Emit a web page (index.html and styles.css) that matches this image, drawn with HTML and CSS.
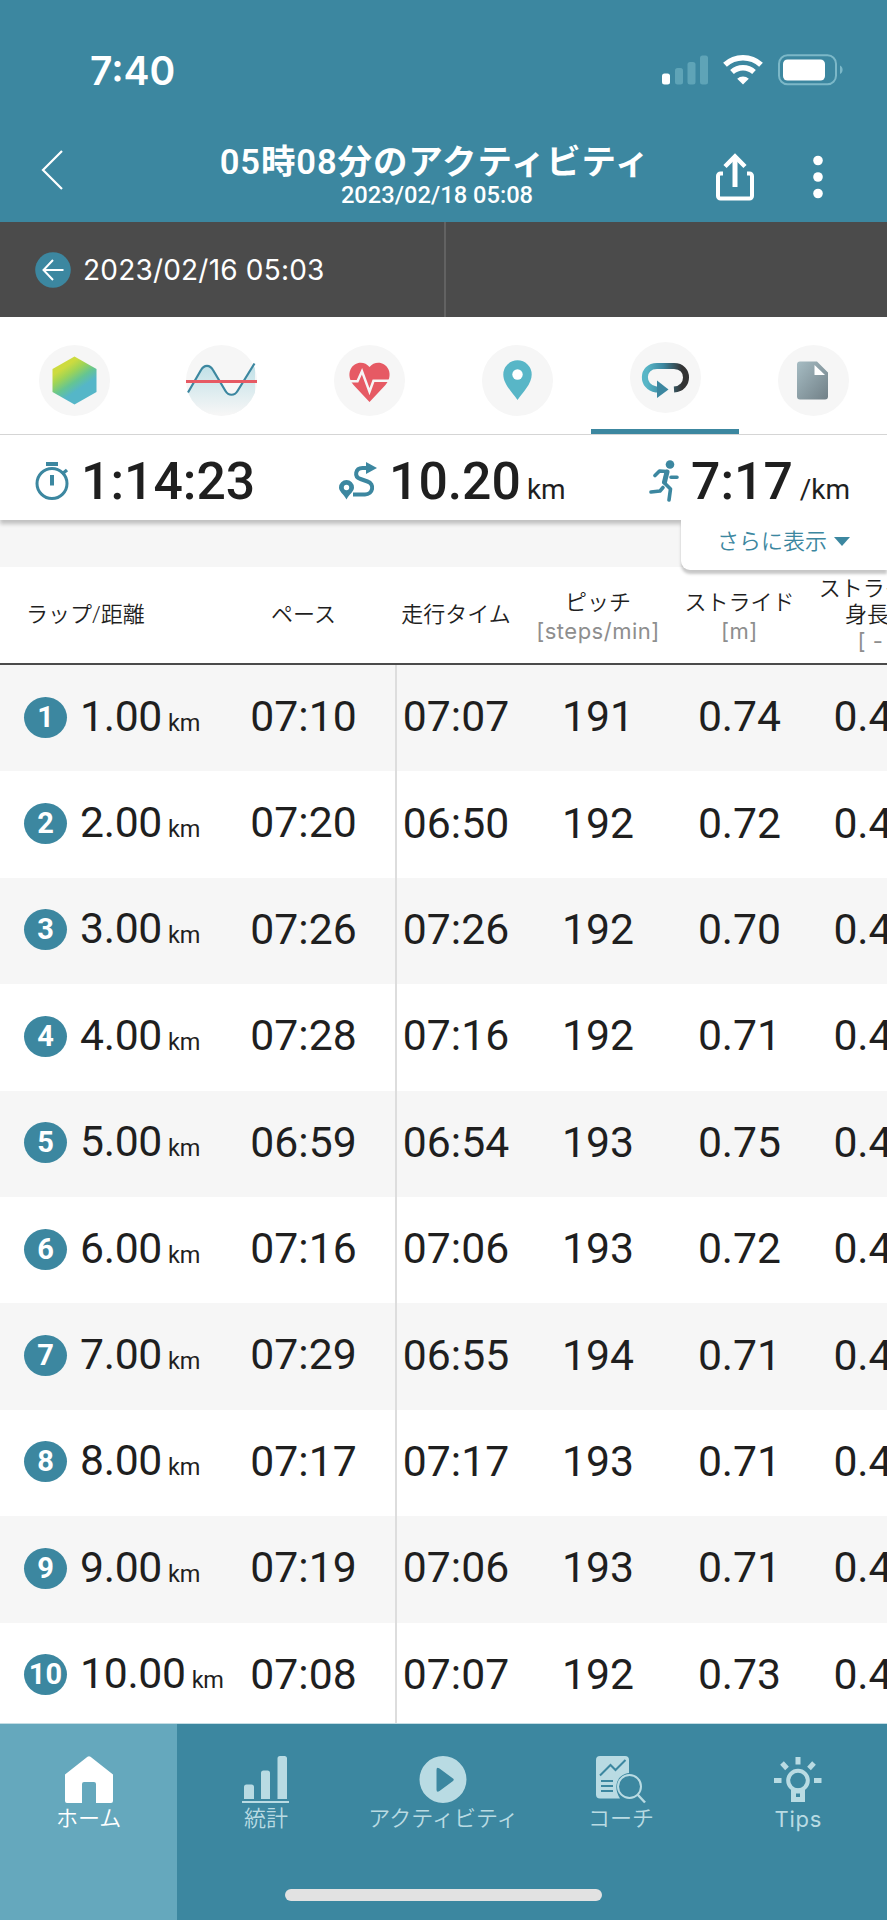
FILE: index.html
```html
<!DOCTYPE html>
<html lang="ja">
<head>
  <meta charset="UTF-8" />
  <title>05時08分のアクティビティ</title>
  <link rel="stylesheet" href="styles.css">
</head>
<body>
  <div class="app">
    <div class="status-bar">
      <span class="clock">7:40</span>
      <svg class="status-icons" width="182" height="32" viewBox="0 0 182 32">
        <rect x="0" y="19.500" width="8" height="11" rx="2.500" fill="#fff"/>
        <g fill="#5fa4b7">
          <rect x="13" y="14" width="8" height="16.500" rx="2.500"/>
          <rect x="25.500" y="8" width="8" height="22.500" rx="2.500"/>
          <rect x="38" y="1.500" width="8" height="29" rx="2.500"/>
        </g>
        <g fill="none" stroke="#fff" stroke-width="5.500">
          <path d="M63 10.700a26.500 26.500 0 0 1 36 0"/>
          <path d="M70 18a16.500 16.500 0 0 1 22 0"/>
        </g>
        <path d="M75.200 24.700a9 9 0 0 1 11.600 0L81 30.500z" fill="#fff"/>
        <rect x="117" y="1.200" width="57" height="29" rx="8.500" fill="none" stroke="#7cb8c8" stroke-width="2"/>
        <rect x="121" y="5.500" width="42" height="21" rx="4.500" fill="#fff"/>
        <path d="M178 11.500c3.500 1.500 3.500 7 0 8.500z" fill="#7cb8c8"/>
      </svg>
    </div>

    <div class="header">
      <svg class="back" width="24" height="42" viewBox="0 0 24 42"><path d="M22 2L3 21l19 19" fill="none" stroke="#fff" stroke-width="2.200"/></svg>
      <div class="header-text">
        <h1>05時08分のアクティビティ</h1>
        <p>2023/02/18 05:08</p>
      </div>
      <svg class="share" width="40" height="48" viewBox="0 0 40 48" fill="none" stroke="#fff">
        <path d="M8 20.500H5.500a2.500 2.500 0 0 0-2.500 2.500v20a2.500 2.500 0 0 0 2.500 2.500h29a2.500 2.500 0 0 0 2.500-2.500V23a2.500 2.500 0 0 0-2.500-2.500H32" stroke-width="4"/>
        <path d="M20 34V4" stroke-width="5"/>
        <path d="M10 13.500L20 3.500l10 10" stroke-width="4.500"/>
      </svg>
      <svg class="more" width="10" height="44" viewBox="0 0 10 44" fill="#fff">
        <circle cx="5" cy="5.500" r="4.800"/><circle cx="5" cy="22" r="4.800"/><circle cx="5" cy="38.500" r="4.800"/>
      </svg>
    </div>

    <div class="prev-next">
      <div class="prev">
        <svg width="36" height="36" viewBox="0 0 36 36">
          <circle cx="18" cy="18" r="17.800" fill="#3c87a0"/>
          <path d="M28.500 18H8.500M18 8L8.500 18l9.500 10" fill="none" stroke="#fff" stroke-width="2"/>
        </svg>
        <span>2023/02/16 05:03</span>
      </div>
      <div class="next"></div>
    </div>

    <div class="tabs">
      <div class="tab">
        <svg width="71" height="71" viewBox="0 0 71 71">
          <defs>
            <linearGradient id="hex" x1="0.200" y1="0.100" x2="0.700" y2="0.900">
              <stop offset="0.150" stop-color="#cddb3f"/><stop offset="0.330" stop-color="#9fd455"/>
              <stop offset="0.550" stop-color="#65c592"/><stop offset="0.750" stop-color="#55b6c8"/>
            </linearGradient>
          </defs>
          <circle cx="35.500" cy="35.500" r="35.500" fill="#f6f6f6"/>
          <path d="M35.500 11.500L57.500 24v23L35.500 59.500 13.500 47V24z" fill="url(#hex)"/>
        </svg>
      </div>
      <div class="tab">
        <svg width="71" height="71" viewBox="0 0 71 71">
          <defs>
            <linearGradient id="wave" x1="0" y1="0" x2="0" y2="1">
              <stop offset="0" stop-color="#bfe0e7"/><stop offset="1" stop-color="#f6f6f6"/>
            </linearGradient>
            <clipPath id="disc"><circle cx="35.500" cy="35.500" r="35.500"/></clipPath>
          </defs>
          <circle cx="35.500" cy="35.500" r="35.500" fill="#f6f6f6"/>
          <path clip-path="url(#disc)" d="M2 47.500L15 25c3-5.500 9-5.500 12 0l12.500 21c3 5 9 5 12 0L69 19v50H2z" fill="url(#wave)"/>
          <path d="M2 47.500L15 25c3-5.500 9-5.500 12 0l12.500 21c3 5 9 5 12 0L68.500 18.500" fill="none" stroke="#3c87a0" stroke-width="2.200"/>
          <path d="M0 36.500h71" stroke="#e65a64" stroke-width="3"/>
        </svg>
      </div>
      <div class="tab">
        <svg width="71" height="71" viewBox="0 0 71 71">
          <circle cx="35.500" cy="35.500" r="35.500" fill="#f6f6f6"/>
          <path d="M35.500 57L20 40.500C16 36 14 30 16.500 24.500c3.500-8 14-9 19-2.500 5-6.500 15.500-5.500 19 2.500C57 30 55 36 51 40.500z" fill="#e65a64"/>
          <path d="M15 36.200h8.500l4.500-10 7.500 20.500 4-11H56" fill="none" stroke="#f6f6f6" stroke-width="2.500"/>
        </svg>
      </div>
      <div class="tab">
        <svg width="71" height="71" viewBox="0 0 71 71">
          <circle cx="35.500" cy="35.500" r="35.500" fill="#f6f6f6"/>
          <path d="M35.500 55C30 47 21.300 39 21.300 29.500a14.200 14.200 0 0 1 28.400 0C49.700 39 41 47 35.500 55z" fill="#58b6c7"/>
          <circle cx="35.500" cy="29.500" r="5.200" fill="#fff"/>
        </svg>
      </div>
      <div class="tab active">
        <svg width="71" height="71" viewBox="0 0 71 71">
          <defs>
            <linearGradient id="lap" gradientUnits="userSpaceOnUse" x1="12" y1="0" x2="59" y2="0">
              <stop offset="0.100" stop-color="#58b6c7"/><stop offset="0.450" stop-color="#3c87a0"/><stop offset="0.850" stop-color="#333"/>
            </linearGradient>
          </defs>
          <circle cx="35.500" cy="35.500" r="35.500" fill="#f6f6f6"/>
          <path d="M27.500 47.500H26C11 45.500 11 24 27 24h17c16 0 16 22.500 0 23.500" fill="none" stroke="url(#lap)" stroke-width="6"/>
          <path d="M27 38.500l11.500 9L27 56z" fill="#3c87a0"/>
        </svg>
      </div>
      <div class="tab">
        <svg width="71" height="71" viewBox="0 0 71 71">
          <defs>
            <linearGradient id="doc" x1="0" y1="0" x2="1" y2="1">
              <stop offset="0" stop-color="#a6bcc3"/><stop offset="1" stop-color="#718087"/>
            </linearGradient>
          </defs>
          <circle cx="35.500" cy="35.500" r="35.500" fill="#f6f6f6"/>
          <path d="M22 16.500H39L50 27.500v24a3 3 0 0 1-3 3H22a3 3 0 0 1-3-3v-32a3 3 0 0 1 3-3z" fill="url(#doc)"/>
          <path d="M36.500 20v10H47z" fill="#fff"/>
        </svg>
      </div>
    </div>

    <div class="summary">
      <div class="stat time">
        <svg width="34" height="38" viewBox="0 0 34 38" fill="none" stroke="#3c87a0">
          <circle cx="17" cy="21.500" r="15" stroke-width="3"/>
          <path d="M11 2h12M17 13v10.500" stroke-width="4"/>
          <path d="M27 12l5-4" stroke-width="3.500"/>
        </svg>
        <b>1:14:23</b>
      </div>
      <div class="stat dist">
        <svg width="38" height="38" viewBox="0 0 38 38">
          <path d="M0 25.500a7 7 0 0 1 15 0c0 4-4.500 6.500-7.500 12C4.500 32 0 29.500 0 25.500z" fill="#3c87a0"/>
          <circle cx="7.500" cy="25.500" r="2.700" fill="#fff"/>
          <path d="M28 6h-4.500c-7 0-9 8.500-2 11l7 2.500c7.500 2.500 5.500 13-2.500 13H14" fill="none" stroke="#3c87a0" stroke-width="4"/>
          <path d="M27 0l11 6-11 6z" fill="#3c87a0"/>
        </svg>
        <b>10.20</b><small>km</small>
      </div>
      <div class="stat pace">
        <svg width="30" height="42" viewBox="0 0 30 42" fill="none" stroke="#3c87a0" stroke-linecap="round" stroke-linejoin="round">
          <circle cx="21" cy="4.500" r="4.300" fill="#3c87a0" stroke="none"/>
          <path d="M6 15.500l4.500-4.500 7 .5-2 11.500 6 6-1.500 11" stroke-width="3.600"/>
          <path d="M18 12l-2.500 10" stroke-width="5"/>
          <path d="M22 17.300h6M2 32l9-1 3-3.500" stroke-width="3.600"/>
        </svg>
        <b>7:17</b><small>/km</small>
      </div>
      <div class="show-more">さらに表示 <i class="caret"></i></div>
    </div>

    <div class="spacer"></div>

    <div class="laps">
      <div class="lap-row lap-head">
        <span class="first">ラップ/距離</span>
        <span>ペース</span>
        <span>走行タイム</span>
        <span class="two-line">ピッチ<em>[steps/min]</em></span>
        <span class="two-line">ストライド<em>[m]</em></span>
        <span class="last">ストライド/<br>身長比<em>[ - ]</em></span>
      </div>
      <div class="lap-row"><div class="lap"><i>1</i>1.00<small>km</small></div><span class="pinned">07:10</span><span>07:07</span><span>191</span><span>0.74</span><span>0.44</span></div>
      <div class="lap-row"><div class="lap"><i>2</i>2.00<small>km</small></div><span class="pinned">07:20</span><span>06:50</span><span>192</span><span>0.72</span><span>0.43</span></div>
      <div class="lap-row"><div class="lap"><i>3</i>3.00<small>km</small></div><span class="pinned">07:26</span><span>07:26</span><span>192</span><span>0.70</span><span>0.42</span></div>
      <div class="lap-row"><div class="lap"><i>4</i>4.00<small>km</small></div><span class="pinned">07:28</span><span>07:16</span><span>192</span><span>0.71</span><span>0.42</span></div>
      <div class="lap-row"><div class="lap"><i>5</i>5.00<small>km</small></div><span class="pinned">06:59</span><span>06:54</span><span>193</span><span>0.75</span><span>0.44</span></div>
      <div class="lap-row"><div class="lap"><i>6</i>6.00<small>km</small></div><span class="pinned">07:16</span><span>07:06</span><span>193</span><span>0.72</span><span>0.43</span></div>
      <div class="lap-row"><div class="lap"><i>7</i>7.00<small>km</small></div><span class="pinned">07:29</span><span>06:55</span><span>194</span><span>0.71</span><span>0.42</span></div>
      <div class="lap-row"><div class="lap"><i>8</i>8.00<small>km</small></div><span class="pinned">07:17</span><span>07:17</span><span>193</span><span>0.71</span><span>0.42</span></div>
      <div class="lap-row"><div class="lap"><i>9</i>9.00<small>km</small></div><span class="pinned">07:19</span><span>07:06</span><span>193</span><span>0.71</span><span>0.42</span></div>
      <div class="lap-row"><div class="lap"><i>10</i>10.00<small>km</small></div><span class="pinned">07:08</span><span>07:07</span><span>192</span><span>0.73</span><span>0.43</span></div>
    </div>

    <div class="bottom-nav">
      <div class="nav-item active">
        <svg width="48" height="48" viewBox="0 0 48 48" fill="currentColor">
          <path d="M22.500.7a2.500 2.500 0 0 1 3 0L48 18.500V45a2 2 0 0 1-2 2H31V28a2 2 0 0 0-2-2H19a2 2 0 0 0-2 2v19H2a2 2 0 0 1-2-2V18.500z"/>
        </svg>
        <span>ホーム</span>
      </div>
      <div class="nav-item">
        <svg width="48" height="48" viewBox="0 0 48 48" fill="currentColor">
          <path d="M2 43V31a2.500 2.500 0 0 1 2.500-2.500h5A2.500 2.500 0 0 1 12 31v12zM19 43V17a2.500 2.500 0 0 1 2.500-2.500h4A2.500 2.500 0 0 1 28 17v26zM35.500 43V2.500A2.500 2.500 0 0 1 38 0h4.500A2.500 2.500 0 0 1 45 2.500V43zM0 45h47v2H0z"/>
        </svg>
        <span>統計</span>
      </div>
      <div class="nav-item">
        <svg width="48" height="48" viewBox="0 0 48 48" fill="currentColor">
          <path fill-rule="evenodd" d="M24 0a23.500 23.500 0 1 0 0 47 23.500 23.500 0 0 0 0-47zM20.500 12.500l13.500 10q1.500 1.200 0 2.400l-13.500 10q-3 2-3-1.500V14q0-3.500 3-1.500z"/>
        </svg>
        <span>アクティビティ</span>
      </div>
      <div class="nav-item">
        <svg width="50" height="48" viewBox="0 0 50 48">
          <path d="M4 0h25a4 4 0 0 1 4 4v13c-11 1-17 13-9 25.500H4a4 4 0 0 1-4-4V4a4 4 0 0 1 4-4z" fill="currentColor"/>
          <path d="M4 19.500L14.500 9l5 5L29.500 4M5 25h12M5 30h12M5 35h12" fill="none" stroke="#3c87a0" stroke-width="2"/>
          <circle cx="33.500" cy="30.500" r="11.500" fill="#3c87a0" stroke="currentColor" stroke-width="2"/>
          <path d="M41.500 38.500l7.500 8" stroke="currentColor" stroke-width="2.500"/>
        </svg>
        <span>コーチ</span>
      </div>
      <div class="nav-item">
        <svg width="48" height="48" viewBox="0 0 48 48" fill="none" stroke="currentColor">
          <circle cx="24" cy="24.500" r="9.800" stroke-width="4"/>
          <path d="M24 1v7.500M0 24.500h7.500M40 24.500h7.500M8 7l5 5.500M40 7l-5 5.500" stroke-width="5"/>
          <path d="M19.500 35v8.500h9V35z" stroke-width="5"/>
        </svg>
        <span class="latin">Tips</span>
      </div>
      <div class="home-indicator"></div>
    </div>
  </div>
</body>
</html>
```
FILE: styles.css
```css
:root {
  --teal: #3c87a0;
  --light-teal: #65a8bd;
  --text: #1f1f1f;
  --grey: #f6f6f6;
}

* {
  box-sizing: border-box;
}

body {
  margin: 0;
  font-family: Roboto, "Noto Sans CJK JP", sans-serif;
  color: var(--text);
  background: #fff;
}

svg {
  display: block;
  flex: none;
}

.app {
  width: 887px;
  height: 1920px;
  overflow: hidden;
  display: flex;
  flex-direction: column;
}

.status-bar {
  height: 136px;
  flex: none;
  background: var(--teal);
  display: flex;
  justify-content: space-between;
  align-items: flex-start;
  padding: 54px 43px 0 90px;
}

.clock {
  margin-top: 1px;
  font: 600 39px/32px Inter, sans-serif;
  color: #fff;
}

.header {
  height: 86px;
  flex: none;
  background: var(--teal);
  color: #fff;
  display: flex;
  align-items: flex-start;
}

.back {
  margin: 13px 0 0 40px;
}

.header-text {
  width: 500px;
  margin-left: 121px;
  text-align: center;
}

.header-text h1 {
  margin: 4px 0 0;
  font-size: 34.5px;
  line-height: 44px;
  font-weight: 600;
  letter-spacing: 0.9px;
  white-space: nowrap;
}

.header-text p {
  margin: -2px 0 0 4px;
  font-size: 23.7px;
  line-height: 26px;
  font-weight: 500;
}

.share {
  margin: 17px 0 0 30px;
}

.more {
  margin: 19px 0 0 58px;
}

.prev-next {
  height: 95px;
  flex: none;
  display: flex;
  background: #4b4b4b;
}

.prev {
  width: 446px;
  border-right: 2px solid #626262;
  display: flex;
  align-items: center;
  padding-left: 35px;
  color: #fff;
  font-family: Inter, sans-serif;
  font-size: 28px;
  letter-spacing: 0.2px;
}

.prev span {
  margin-left: 12px;
}

.tabs {
  height: 118px;
  flex: none;
  display: grid;
  grid-template-columns: repeat(6, 1fr);
  border-bottom: 1px solid #d5d5d5;
}

.tab {
  display: flex;
  justify-content: center;
  padding-top: 28px;
}

.tab:first-child {
  padding-left: 1px;
}

.tab.active {
  padding-top: 25px;
  border-bottom: 5px solid var(--teal);
}

.summary {
  position: relative;
  height: 85px;
  flex: none;
  display: flex;
  background: #fff;
  box-shadow: 0 4px 4px rgba(0, 0, 0, 0.22);
}

.stat {
  display: flex;
  align-items: baseline;
}

.stat svg {
  align-self: flex-start;
  margin-top: 27px;
}

.stat b {
  font-size: 51.7px;
  line-height: 94px;
  font-weight: 500;
}

.stat small {
  font-size: 28px;
}

.time {
  width: 339px;
  padding-left: 35px;
}

.time b {
  margin-left: 12px;
}

.dist {
  width: 310px;
}

.dist b {
  margin-left: 12px;
}

.dist small {
  margin-left: 6px;
}

.pace svg {
  margin-top: 25px;
}

.pace b {
  margin-left: 12px;
}

.pace small {
  margin-left: 7px;
}

/* hangs off the bottom of the summary bar */
.show-more {
  position: absolute;
  right: 0;
  top: 85px;
  width: 206px;
  height: 50px;
  padding-left: 36px;
  display: flex;
  align-items: center;
  padding-bottom: 12px;
  background: #fff;
  color: var(--teal);
  font-size: 22px;
  font-weight: 350;
  border-bottom-left-radius: 9px;
  box-shadow: 0 4px 3px rgba(0, 0, 0, 0.22);
}

.caret {
  margin: 5px 0 0 7px;
  border: 8px solid transparent;
  border-top: 9px solid var(--teal);
  border-bottom: 0;
}

.spacer {
  height: 47px;
  flex: none;
  background: var(--grey);
}

.laps {
  height: 1156px;
  flex: none;
  overflow: hidden;
}

.lap-row {
  width: 952px;
  height: 106.4px;
  display: grid;
  grid-template-columns: 210px 187px 118px 166px 117px 154px;
  align-items: center;
  text-align: center;
  font-size: 42.7px;
  background: var(--grey);
}

.lap-row:nth-child(odd) {
  background: #fff;
}

.lap-row > span {
  padding-bottom: 4px;
}

.lap-row > .pinned {
  height: 106.4px;
  padding-left: 2px;
  line-height: 102px;
  border-right: 2px solid #ddd;
}

.lap {
  display: flex;
  align-items: baseline;
  padding: 0 0 4px 24px;
  letter-spacing: -0.3px;
}

.lap i {
  position: relative;
  top: -4px;
  flex: none;
  width: 43px;
  height: 41px;
  margin-right: 13px;
  border-radius: 50%;
  background: var(--teal);
  color: #fff;
  font-size: 29px;
  line-height: 41px;
  font-weight: 700;
  font-style: normal;
  letter-spacing: 0;
  text-align: center;
}

.lap small {
  margin-left: 6px;
  font-size: 23.5px;
}

.lap-row.lap-head {
  height: 98px;
  font-size: 22px;
  line-height: 26px;
  font-weight: 350;
  border-bottom: 2px solid #4b4b4b;
}

.lap-head > span {
  padding: 0;
}

.lap-head .first {
  text-align: left;
  padding-left: 26px;
}

.lap-head .last {
  padding-left: 6px;
}

.lap-head em {
  display: block;
  font-family: Inter, sans-serif;
  font-style: normal;
  font-weight: 400;
  letter-spacing: 0.5px;
  color: #8e8e8e;
}

.lap-head .two-line {
  line-height: 29px;
  padding-top: 3px;
}

.bottom-nav {
  position: relative;
  height: 197px;
  flex: none;
  display: grid;
  grid-template-columns: repeat(5, 1fr);
  border-top: 1px solid #c3dde4;
  background: var(--teal);
  color: #b9dbe3;
}

.nav-item {
  display: flex;
  flex-direction: column;
  align-items: center;
  padding-top: 32px;
  font-size: 22px;
  line-height: 30px;
  font-weight: 350;
}

.nav-item.active {
  background: var(--light-teal);
  color: #fff;
}

.nav-item .latin {
  font-family: Inter, sans-serif;
  font-weight: 400;
  letter-spacing: 0.8px;
}

.home-indicator {
  position: absolute;
  left: 285px;
  bottom: 19px;
  width: 317px;
  height: 12px;
  border-radius: 6px;
  background: #e2e2e2;
}
```
